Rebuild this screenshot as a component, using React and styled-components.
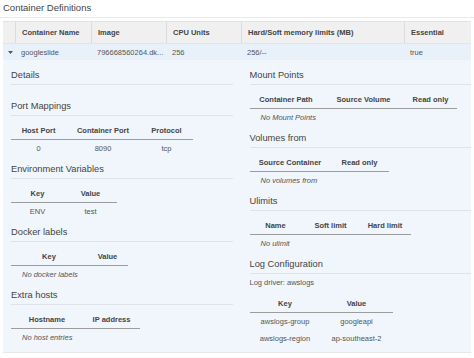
import React from 'react';
import styled, { createGlobalStyle } from 'styled-components';

const GlobalStyle = createGlobalStyle`
  html, body { margin: 0; padding: 0; background: #fff; }
  body { font-family: "Liberation Sans", Arial, Helvetica, sans-serif; color: #555; }
`;

const Page = styled.div`
  width: 474px;
  height: 358px;
  overflow: hidden;
  background: #fff;
`;

const Title = styled.div`
  padding: 2px 3px 3px;
  font-size: 9.5px;
  line-height: 12px;
  color: #444;
  border-bottom: 1px solid #e8e8e8;
`;

const Panel = styled.div`
  margin: 3px 3px 0;
`;

const mainCols = '12px 76px 75px 75px 163px 1fr';

const HeaderRow = styled.div`
  display: grid;
  grid-template-columns: ${mainCols};
  height: 21px;
  background: #f0f0f0;
  border-top: 1px solid #e2e2e2;
  border-bottom: 1px solid #e4e4e4;
`;

const HeaderCell = styled.div`
  display: flex;
  align-items: center;
  padding-left: 6px;
  font-size: 7.5px;
  font-weight: bold;
  color: #444;
  border-left: ${(p) => (p.$first ? 'none' : '1px solid #dcdcdc')};
  white-space: nowrap;
  overflow: hidden;
`;

const DataRow = styled.div`
  display: grid;
  grid-template-columns: ${mainCols};
  height: 16px;
  background: #e8f1fa;
`;

const DataCell = styled.div`
  display: flex;
  align-items: center;
  padding-left: ${(p) => (p.$arrow ? '5px' : '6px')};
  font-size: 7.5px;
  color: #555;
  white-space: nowrap;
  overflow: hidden;
`;

const Detail = styled.div`
  display: grid;
  grid-template-columns: 1fr 1fr;
  column-gap: 17px;
  align-items: start;
  padding: 9px 0 5px 8px;
  background: #f0f6fc;
  border-bottom: 1px solid #e6e9ec;
`;

const Column = styled.div`
  display: flex;
  flex-direction: column;
`;

const Section = styled.div`
  margin-bottom: ${(p) => p.$after ?? 6}px;
  &:last-child { margin-bottom: 0; }
`;

const SectionTitle = styled.div`
  font-size: 9.3px;
  line-height: 12px;
  padding-bottom: 3px;
  color: #444;
  border-bottom: 1px solid #dde3e9;
`;

const Note = styled.div`
  margin-top: 3px;
  font-size: 7.5px;
  line-height: 11px;
  color: #555;
`;

const SubTable = styled.div`
  display: grid;
  grid-template-columns: ${(p) => p.$cols.map((c) => c + 'px').join(' ')};
  margin-top: ${(p) => p.$top ?? 7}px;
  font-size: 7.5px;
`;

const SubHead = styled.div`
  height: 16px;
  line-height: 16px;
  text-align: center;
  font-weight: bold;
  color: #444;
  border-bottom: 1px solid #9c9c9c;
  white-space: nowrap;
`;

const SubCell = styled.div`
  height: 17px;
  line-height: 17px;
  text-align: center;
  color: #555;
  white-space: nowrap;
`;

const EmptyCell = styled.div`
  grid-column: 1 / -1;
  height: 17px;
  line-height: 17px;
  padding-left: 11px;
  font-style: italic;
  color: #555;
  white-space: nowrap;
`;

const Caret = () => (
  <svg width="5" height="3" viewBox="0 0 5 3">
    <polygon points="0,0 5,0 2.5,3" fill="#555" />
  </svg>
);

const KVTable = ({ cols, heads, rows, empty, top }) => (
  <SubTable $cols={cols} $top={top}>
    {heads.map((h) => (
      <SubHead key={h}>{h}</SubHead>
    ))}
    {rows && rows.length
      ? rows.map((r, i) => r.map((c, j) => <SubCell key={i + '-' + j}>{c}</SubCell>))
      : <EmptyCell>{empty}</EmptyCell>}
  </SubTable>
);

export default function App() {
  return (
    <Page>
      <GlobalStyle />
      <Title>Container Definitions</Title>
      <Panel>
        <HeaderRow>
          <HeaderCell $first />
          <HeaderCell>Container Name</HeaderCell>
          <HeaderCell>Image</HeaderCell>
          <HeaderCell>CPU Units</HeaderCell>
          <HeaderCell>Hard/Soft memory limits (MB)</HeaderCell>
          <HeaderCell>Essential</HeaderCell>
        </HeaderRow>
        <DataRow>
          <DataCell $arrow><Caret /></DataCell>
          <DataCell>googleslide</DataCell>
          <DataCell>796668560264.dk...</DataCell>
          <DataCell>256</DataCell>
          <DataCell>256/--</DataCell>
          <DataCell>true</DataCell>
        </DataRow>
        <Detail>
          <Column>
            <Section $after={15}>
              <SectionTitle>Details</SectionTitle>
            </Section>
            <Section>
              <SectionTitle>Port Mappings</SectionTitle>
              <KVTable
                cols={[55, 74, 53]}
                heads={['Host Port', 'Container Port', 'Protocol']}
                rows={[['0', '8090', 'tcp']]}
              />
            </Section>
            <Section>
              <SectionTitle>Environment Variables</SectionTitle>
              <KVTable cols={[53, 53]} heads={['Key', 'Value']} rows={[['ENV', 'test']]} />
            </Section>
            <Section>
              <SectionTitle>Docker labels</SectionTitle>
              <KVTable cols={[76, 41]} heads={['Key', 'Value']} empty="No docker labels" />
            </Section>
            <Section>
              <SectionTitle>Extra hosts</SectionTitle>
              <KVTable cols={[72, 57]} heads={['Hostname', 'IP address']} empty="No host entries" />
            </Section>
          </Column>
          <Column>
            <Section>
              <SectionTitle>Mount Points</SectionTitle>
              <KVTable
                cols={[73, 82, 52]}
                heads={['Container Path', 'Source Volume', 'Read only']}
                empty="No Mount Points"
              />
            </Section>
            <Section>
              <SectionTitle>Volumes from</SectionTitle>
              <KVTable cols={[81, 58]} heads={['Source Container', 'Read only']} empty="No volumes from" />
            </Section>
            <Section>
              <SectionTitle>Ulimits</SectionTitle>
              <KVTable cols={[52, 58, 51]} heads={['Name', 'Soft limit', 'Hard limit']} empty="No ulimit" />
            </Section>
            <Section>
              <SectionTitle>Log Configuration</SectionTitle>
              <Note>Log driver: awslogs</Note>
              <KVTable
                top={8}
                cols={[71, 72]}
                heads={['Key', 'Value']}
                rows={[
                  ['awslogs-group', 'googleapi'],
                  ['awslogs-region', 'ap-southeast-2'],
                ]}
              />
            </Section>
          </Column>
        </Detail>
      </Panel>
    </Page>
  );
}
